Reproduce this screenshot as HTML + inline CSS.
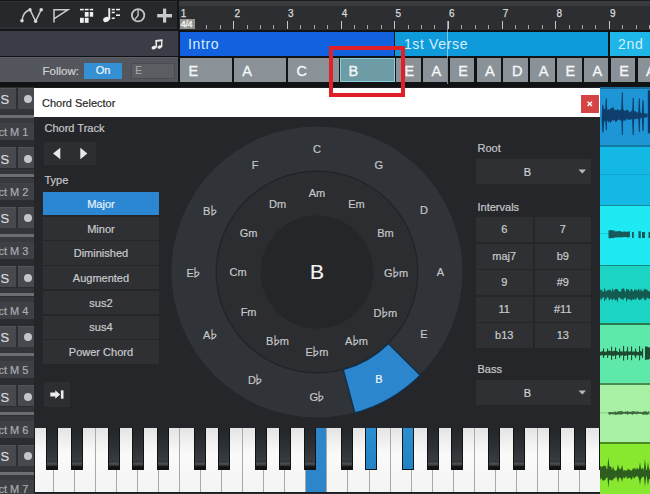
<!DOCTYPE html>
<html><head><meta charset="utf-8"><style>
*{margin:0;padding:0;box-sizing:border-box}
html,body{width:650px;height:494px;overflow:hidden;background:#1b1c1f;font-family:"Liberation Sans",sans-serif}
.ab{position:absolute}
.t{position:absolute;white-space:nowrap;line-height:1;-webkit-text-stroke:0.2px currentColor}
</style></head><body>
<div class="ab" style="left:0;top:0;width:650px;height:494px;overflow:hidden">

<div class="ab" style="left:0;top:0;width:178px;height:30px;background:#26282c;border-top:1px solid #141517"></div>
<div class="ab" style="left:0;top:1px;width:178px;height:1px;background:#2e3034"></div>
<div class="ab" style="left:0;top:27px;width:178px;height:1.5px;background:#2c2e32"></div>
<div class="ab" style="left:0;top:28.8px;width:650px;height:2.2px;background:#141517"></div>
<div class="ab" style="left:179px;top:0;width:471px;height:29.5px;background:#2c2e32"></div>
<div class="ab" style="left:179px;top:0;width:471px;height:1px;background:#1c1d20"></div>
<div class="ab" style="left:179px;top:1px;width:471px;height:5px;background:#393b3f"></div>
<div class="ab" style="left:177px;top:0;width:2px;height:31px;background:#141517"></div>
<div class="t" style="left:180.8px;top:8.9px;font-size:10px;color:#dcdcdc;-webkit-text-stroke:0.25px #dcdcdc">1</div>
<div class="ab" style="left:179.5px;top:21px;width:1px;height:8px;background:#c8c8c8"></div>
<div class="ab" style="left:192.9px;top:25px;width:1px;height:4px;background:#a8a8a8"></div>
<div class="ab" style="left:206.3px;top:25px;width:1px;height:4px;background:#a8a8a8"></div>
<div class="ab" style="left:219.7px;top:25px;width:1px;height:4px;background:#a8a8a8"></div>
<div class="t" style="left:234.5px;top:8.9px;font-size:10px;color:#dcdcdc;-webkit-text-stroke:0.25px #dcdcdc">2</div>
<div class="ab" style="left:233.2px;top:21px;width:1px;height:8px;background:#c8c8c8"></div>
<div class="ab" style="left:246.6px;top:25px;width:1px;height:4px;background:#a8a8a8"></div>
<div class="ab" style="left:260.0px;top:25px;width:1px;height:4px;background:#a8a8a8"></div>
<div class="ab" style="left:273.4px;top:25px;width:1px;height:4px;background:#a8a8a8"></div>
<div class="t" style="left:288.1px;top:8.9px;font-size:10px;color:#dcdcdc;-webkit-text-stroke:0.25px #dcdcdc">3</div>
<div class="ab" style="left:286.8px;top:21px;width:1px;height:8px;background:#c8c8c8"></div>
<div class="ab" style="left:300.2px;top:25px;width:1px;height:4px;background:#a8a8a8"></div>
<div class="ab" style="left:313.6px;top:25px;width:1px;height:4px;background:#a8a8a8"></div>
<div class="ab" style="left:327.1px;top:25px;width:1px;height:4px;background:#a8a8a8"></div>
<div class="t" style="left:341.8px;top:8.9px;font-size:10px;color:#dcdcdc;-webkit-text-stroke:0.25px #dcdcdc">4</div>
<div class="ab" style="left:340.5px;top:21px;width:1px;height:8px;background:#c8c8c8"></div>
<div class="ab" style="left:353.9px;top:25px;width:1px;height:4px;background:#a8a8a8"></div>
<div class="ab" style="left:367.3px;top:25px;width:1px;height:4px;background:#a8a8a8"></div>
<div class="ab" style="left:380.7px;top:25px;width:1px;height:4px;background:#a8a8a8"></div>
<div class="t" style="left:395.4px;top:8.9px;font-size:10px;color:#dcdcdc;-webkit-text-stroke:0.25px #dcdcdc">5</div>
<div class="ab" style="left:394.1px;top:21px;width:1px;height:8px;background:#c8c8c8"></div>
<div class="ab" style="left:407.6px;top:25px;width:1px;height:4px;background:#a8a8a8"></div>
<div class="ab" style="left:421.0px;top:25px;width:1px;height:4px;background:#a8a8a8"></div>
<div class="ab" style="left:434.4px;top:25px;width:1px;height:4px;background:#a8a8a8"></div>
<div class="t" style="left:449.1px;top:8.9px;font-size:10px;color:#dcdcdc;-webkit-text-stroke:0.25px #dcdcdc">6</div>
<div class="ab" style="left:447.8px;top:21px;width:1px;height:8px;background:#c8c8c8"></div>
<div class="ab" style="left:461.2px;top:25px;width:1px;height:4px;background:#a8a8a8"></div>
<div class="ab" style="left:474.6px;top:25px;width:1px;height:4px;background:#a8a8a8"></div>
<div class="ab" style="left:488.0px;top:25px;width:1px;height:4px;background:#a8a8a8"></div>
<div class="t" style="left:502.8px;top:8.9px;font-size:10px;color:#dcdcdc;-webkit-text-stroke:0.25px #dcdcdc">7</div>
<div class="ab" style="left:501.5px;top:21px;width:1px;height:8px;background:#c8c8c8"></div>
<div class="ab" style="left:514.9px;top:25px;width:1px;height:4px;background:#a8a8a8"></div>
<div class="ab" style="left:528.3px;top:25px;width:1px;height:4px;background:#a8a8a8"></div>
<div class="ab" style="left:541.7px;top:25px;width:1px;height:4px;background:#a8a8a8"></div>
<div class="t" style="left:556.4px;top:8.9px;font-size:10px;color:#dcdcdc;-webkit-text-stroke:0.25px #dcdcdc">8</div>
<div class="ab" style="left:555.1px;top:21px;width:1px;height:8px;background:#c8c8c8"></div>
<div class="ab" style="left:568.5px;top:25px;width:1px;height:4px;background:#a8a8a8"></div>
<div class="ab" style="left:582.0px;top:25px;width:1px;height:4px;background:#a8a8a8"></div>
<div class="ab" style="left:595.4px;top:25px;width:1px;height:4px;background:#a8a8a8"></div>
<div class="t" style="left:610.1px;top:8.9px;font-size:10px;color:#dcdcdc;-webkit-text-stroke:0.25px #dcdcdc">9</div>
<div class="ab" style="left:608.8px;top:21px;width:1px;height:8px;background:#c8c8c8"></div>
<div class="ab" style="left:622.2px;top:25px;width:1px;height:4px;background:#a8a8a8"></div>
<div class="ab" style="left:635.6px;top:25px;width:1px;height:4px;background:#a8a8a8"></div>
<div class="ab" style="left:649.0px;top:25px;width:1px;height:4px;background:#a8a8a8"></div>
<div class="ab" style="left:179.5px;top:18.8px;width:15.5px;height:10.7px;background:#92928c"></div>
<div class="t" style="left:180.8px;top:19.8px;font-size:9px;color:#f4f4f4;letter-spacing:-0.4px;-webkit-text-stroke:0.35px #f4f4f4">4/4</div>
<svg class="ab" style="left:0;top:0" width="178" height="30">
<g fill="none" stroke="#c9cacb" stroke-width="1.5" stroke-linecap="round">
<path d="M22 20.8 C22.5 15 25.5 11 30 9.7"/><path d="M30 9.7 L35.6 21.3 L41.2 9.7"/>
<path d="M54 22 V9.7 H68 L54.3 18.7"/>
</g>
<g fill="#d6d7d8">
<circle cx="22" cy="20.8" r="1.8"/><circle cx="30" cy="9.7" r="1.7"/><circle cx="35.6" cy="21.3" r="1.7"/><circle cx="41.2" cy="9.7" r="1.8"/>
</g>
<g fill="#f0f0f0">
<rect x="80" y="8.8" width="3.8" height="1.6"/><rect x="84.8" y="8.8" width="3.8" height="1.6"/><rect x="89.8" y="8.8" width="3.4" height="1.6"/>
<rect x="84.8" y="12" width="3.8" height="4.7"/><rect x="89.8" y="12" width="3.4" height="4.7"/>
<rect x="80" y="17.8" width="3.8" height="5"/><rect x="84.8" y="17.8" width="3.8" height="5"/>
<ellipse cx="106.2" cy="19.6" rx="3.1" ry="2.5" transform="rotate(-25 106.2 19.6)"/><rect x="108.3" y="8.2" width="1.9" height="11.4"/>
<rect x="111.7" y="8.8" width="3.1" height="1.5"/><rect x="116" y="8.8" width="4" height="1.5"/>
<rect x="111.7" y="11.7" width="3.1" height="1.5"/><rect x="116" y="14.4" width="4" height="1.6"/>
<rect x="111.7" y="17.5" width="3.1" height="1.5"/>
</g>
<g fill="#c8c9ca">
<rect x="157.2" y="14" width="14.8" height="3.4"/><rect x="163" y="8.6" width="3.2" height="14"/>
</g>
<g fill="none" stroke="#c4c5c6">
<circle cx="138.1" cy="15.25" r="6.2" stroke-width="1.8"/>
<path d="M138.1 10 V15.5 L134.6 19.6" stroke-width="1.4"/>
</g>
</svg>
<div class="ab" style="left:0;top:31px;width:178px;height:25px;background:#3a3d45"></div>
<svg class="ab" style="left:146px;top:34px" width="24" height="20"><g fill="#ececec"><path d="M9.5 6.1 L16.4 5.2 V7.1 L9.5 8 Z"/><rect x="9.5" y="6.5" width="1.5" height="7"/><rect x="15" y="5.7" width="1.4" height="7.2"/><ellipse cx="7.9" cy="13.6" rx="2.4" ry="1.8" transform="rotate(-20 7.9 13.6)"/><ellipse cx="13.6" cy="13" rx="2.2" ry="1.7" transform="rotate(-20 13.6 13)"/></g></svg>
<div class="ab" style="left:179px;top:31px;width:471px;height:26px;background:#111214"></div>
<div class="ab" style="left:179.5px;top:31.5px;width:214.0px;height:24.5px;background:#1262e0"></div>
<div class="t" style="left:188.0px;top:37px;font-size:14px;letter-spacing:0.65px;color:#d6eefc;-webkit-text-stroke:0">Intro</div>
<div class="ab" style="left:395.4px;top:31.5px;width:212.4px;height:24.5px;background:#0f9bdb"></div>
<div class="t" style="left:403.9px;top:37px;font-size:14px;letter-spacing:0.65px;color:#d6eefc;-webkit-text-stroke:0">1st Verse</div>
<div class="ab" style="left:609.6px;top:31.5px;width:90.4px;height:24.5px;background:#1eb6e8"></div>
<div class="t" style="left:618.1px;top:37px;font-size:14px;letter-spacing:0.65px;color:#d6eefc;-webkit-text-stroke:0">2nd</div>
<div class="ab" style="left:0;top:56px;width:650px;height:31px;background:#111214"></div>
<div class="ab" style="left:0;top:57px;width:178px;height:24.8px;background:#53565c;border-top:1px solid #5c5f65"></div>
<div class="t" style="left:42.5px;top:65.5px;font-size:11.5px;color:#d0d2d4">Follow:</div>
<div class="ab" style="left:84px;top:62.5px;width:38px;height:16.5px;background:#3590d3"></div>
<div class="t" style="left:84px;top:64.5px;width:38px;text-align:center;font-size:11px;color:#eef6fc">On</div>
<div class="ab" style="left:130.5px;top:63px;width:44px;height:16px;background:#5a5d62;border:1px solid #4a4d52"></div>
<div class="t" style="left:135.3px;top:65.8px;font-size:10px;color:#a8abae">E</div>
<div class="ab" style="left:180.0px;top:57.6px;width:51.9px;height:24.8px;background:#8a9298;"></div>
<div class="t" style="left:188.5px;top:64px;font-size:14.5px;color:#f4f6f7;-webkit-text-stroke:0.35px #f4f6f7">E</div>
<div class="ab" style="left:233.7px;top:57.6px;width:52.8px;height:24.8px;background:#8a9298;"></div>
<div class="t" style="left:242.2px;top:64px;font-size:14.5px;color:#f4f6f7;-webkit-text-stroke:0.35px #f4f6f7">A</div>
<div class="ab" style="left:288.0px;top:57.6px;width:50.5px;height:24.8px;background:#8a9298;"></div>
<div class="t" style="left:296.5px;top:64px;font-size:14.5px;color:#f4f6f7;-webkit-text-stroke:0.35px #f4f6f7">C</div>
<div class="ab" style="left:340.0px;top:57.6px;width:54.6px;height:24.8px;background:#6d9ca7;border:1px solid #86d2dc;"></div>
<div class="t" style="left:348.5px;top:64px;font-size:14.5px;color:#f4f6f7;-webkit-text-stroke:0.35px #f4f6f7">B</div>
<div class="ab" style="left:396.1px;top:57.6px;width:24.6px;height:24.8px;background:#8a9298;"></div>
<div class="t" style="left:404.6px;top:64px;font-size:14.5px;color:#f4f6f7;-webkit-text-stroke:0.35px #f4f6f7">E</div>
<div class="ab" style="left:422.9px;top:57.6px;width:24.6px;height:24.8px;background:#8a9298;"></div>
<div class="t" style="left:431.4px;top:64px;font-size:14.5px;color:#f4f6f7;-webkit-text-stroke:0.35px #f4f6f7">A</div>
<div class="ab" style="left:449.8px;top:57.6px;width:24.6px;height:24.8px;background:#8a9298;"></div>
<div class="t" style="left:458.3px;top:64px;font-size:14.5px;color:#f4f6f7;-webkit-text-stroke:0.35px #f4f6f7">E</div>
<div class="ab" style="left:476.6px;top:57.6px;width:24.6px;height:24.8px;background:#8a9298;"></div>
<div class="t" style="left:485.1px;top:64px;font-size:14.5px;color:#f4f6f7;-webkit-text-stroke:0.35px #f4f6f7">A</div>
<div class="ab" style="left:503.4px;top:57.6px;width:24.6px;height:24.8px;background:#8a9298;"></div>
<div class="t" style="left:511.9px;top:64px;font-size:14.5px;color:#f4f6f7;-webkit-text-stroke:0.35px #f4f6f7">D</div>
<div class="ab" style="left:530.2px;top:57.6px;width:24.6px;height:24.8px;background:#8a9298;"></div>
<div class="t" style="left:538.8px;top:64px;font-size:14.5px;color:#f4f6f7;-webkit-text-stroke:0.35px #f4f6f7">A</div>
<div class="ab" style="left:557.1px;top:57.6px;width:24.6px;height:24.8px;background:#8a9298;"></div>
<div class="t" style="left:565.6px;top:64px;font-size:14.5px;color:#f4f6f7;-webkit-text-stroke:0.35px #f4f6f7">E</div>
<div class="ab" style="left:583.9px;top:57.6px;width:24.6px;height:24.8px;background:#8a9298;"></div>
<div class="t" style="left:592.4px;top:64px;font-size:14.5px;color:#f4f6f7;-webkit-text-stroke:0.35px #f4f6f7">A</div>
<div class="ab" style="left:610.7px;top:57.6px;width:24.6px;height:24.8px;background:#8a9298;"></div>
<div class="t" style="left:619.2px;top:64px;font-size:14.5px;color:#f4f6f7;-webkit-text-stroke:0.35px #f4f6f7">E</div>
<div class="ab" style="left:637.6px;top:57.6px;width:24.6px;height:24.8px;background:#8a9298;"></div>
<div class="t" style="left:646.1px;top:64px;font-size:14.5px;color:#f4f6f7;-webkit-text-stroke:0.35px #f4f6f7">A</div>
<div class="ab" style="left:0;top:87px;width:34px;height:407px;background:#2a2c30"></div>
<div class="ab" style="left:0;top:87.6px;width:16.2px;height:21.4px;background:#46494e;border-top:1px solid #515459"></div>
<div class="t" style="left:0.5px;top:93.1px;font-size:13px;color:#d8dadc">S</div>
<div class="ab" style="left:16.2px;top:87.6px;width:1.3px;height:21.4px;background:#2e3034"></div>
<div class="ab" style="left:17.5px;top:87.6px;width:16.5px;height:21.4px;background:#46494e;border-top:1px solid #515459"></div>
<div class="ab" style="left:23.6px;top:95.0px;width:8.4px;height:8.4px;border-radius:50%;background:#c4c5c7"></div>
<div class="ab" style="left:0;top:109.0px;width:34px;height:5.9px;background:#333539"></div>
<div class="ab" style="left:0;top:114.9px;width:34px;height:2.8px;background:#6a6d71"></div>
<div class="ab" style="left:0;top:118.0px;width:34px;height:22px;background:#3d4045"></div>
<div class="ab" style="left:0;top:118.0px;width:34px;height:5px;background:#37393e"></div>
<div class="t" style="left:-1.5px;top:127.1px;font-size:11px;color:#a9acaf">ct M 1</div>
<div class="ab" style="left:0;top:147.1px;width:16.2px;height:21.4px;background:#46494e;border-top:1px solid #515459"></div>
<div class="t" style="left:0.5px;top:152.6px;font-size:13px;color:#d8dadc">S</div>
<div class="ab" style="left:16.2px;top:147.1px;width:1.3px;height:21.4px;background:#2e3034"></div>
<div class="ab" style="left:17.5px;top:147.1px;width:16.5px;height:21.4px;background:#46494e;border-top:1px solid #515459"></div>
<div class="ab" style="left:23.6px;top:154.5px;width:8.4px;height:8.4px;border-radius:50%;background:#c4c5c7"></div>
<div class="ab" style="left:0;top:168.5px;width:34px;height:5.9px;background:#333539"></div>
<div class="ab" style="left:0;top:174.4px;width:34px;height:2.8px;background:#6a6d71"></div>
<div class="ab" style="left:0;top:177.5px;width:34px;height:22px;background:#3d4045"></div>
<div class="ab" style="left:0;top:177.5px;width:34px;height:5px;background:#37393e"></div>
<div class="t" style="left:-1.5px;top:186.6px;font-size:11px;color:#a9acaf">ct M 2</div>
<div class="ab" style="left:0;top:206.6px;width:16.2px;height:21.4px;background:#46494e;border-top:1px solid #515459"></div>
<div class="t" style="left:0.5px;top:212.1px;font-size:13px;color:#d8dadc">S</div>
<div class="ab" style="left:16.2px;top:206.6px;width:1.3px;height:21.4px;background:#2e3034"></div>
<div class="ab" style="left:17.5px;top:206.6px;width:16.5px;height:21.4px;background:#46494e;border-top:1px solid #515459"></div>
<div class="ab" style="left:23.6px;top:214.0px;width:8.4px;height:8.4px;border-radius:50%;background:#c4c5c7"></div>
<div class="ab" style="left:0;top:228.0px;width:34px;height:5.9px;background:#333539"></div>
<div class="ab" style="left:0;top:233.9px;width:34px;height:2.8px;background:#6a6d71"></div>
<div class="ab" style="left:0;top:237.0px;width:34px;height:22px;background:#3d4045"></div>
<div class="ab" style="left:0;top:237.0px;width:34px;height:5px;background:#37393e"></div>
<div class="t" style="left:-1.5px;top:246.1px;font-size:11px;color:#a9acaf">ct M 3</div>
<div class="ab" style="left:0;top:266.1px;width:16.2px;height:21.4px;background:#46494e;border-top:1px solid #515459"></div>
<div class="t" style="left:0.5px;top:271.6px;font-size:13px;color:#d8dadc">S</div>
<div class="ab" style="left:16.2px;top:266.1px;width:1.3px;height:21.4px;background:#2e3034"></div>
<div class="ab" style="left:17.5px;top:266.1px;width:16.5px;height:21.4px;background:#46494e;border-top:1px solid #515459"></div>
<div class="ab" style="left:23.6px;top:273.5px;width:8.4px;height:8.4px;border-radius:50%;background:#c4c5c7"></div>
<div class="ab" style="left:0;top:287.5px;width:34px;height:5.9px;background:#333539"></div>
<div class="ab" style="left:0;top:293.4px;width:34px;height:2.8px;background:#6a6d71"></div>
<div class="ab" style="left:0;top:296.5px;width:34px;height:22px;background:#3d4045"></div>
<div class="ab" style="left:0;top:296.5px;width:34px;height:5px;background:#37393e"></div>
<div class="t" style="left:-1.5px;top:305.6px;font-size:11px;color:#a9acaf">ct M 4</div>
<div class="ab" style="left:0;top:325.6px;width:16.2px;height:21.4px;background:#46494e;border-top:1px solid #515459"></div>
<div class="t" style="left:0.5px;top:331.1px;font-size:13px;color:#d8dadc">S</div>
<div class="ab" style="left:16.2px;top:325.6px;width:1.3px;height:21.4px;background:#2e3034"></div>
<div class="ab" style="left:17.5px;top:325.6px;width:16.5px;height:21.4px;background:#46494e;border-top:1px solid #515459"></div>
<div class="ab" style="left:23.6px;top:333.0px;width:8.4px;height:8.4px;border-radius:50%;background:#c4c5c7"></div>
<div class="ab" style="left:0;top:347.0px;width:34px;height:5.9px;background:#333539"></div>
<div class="ab" style="left:0;top:352.9px;width:34px;height:2.8px;background:#6a6d71"></div>
<div class="ab" style="left:0;top:356.0px;width:34px;height:22px;background:#3d4045"></div>
<div class="ab" style="left:0;top:356.0px;width:34px;height:5px;background:#37393e"></div>
<div class="t" style="left:-1.5px;top:365.1px;font-size:11px;color:#a9acaf">ct M 5</div>
<div class="ab" style="left:0;top:385.1px;width:16.2px;height:21.4px;background:#46494e;border-top:1px solid #515459"></div>
<div class="t" style="left:0.5px;top:390.6px;font-size:13px;color:#d8dadc">S</div>
<div class="ab" style="left:16.2px;top:385.1px;width:1.3px;height:21.4px;background:#2e3034"></div>
<div class="ab" style="left:17.5px;top:385.1px;width:16.5px;height:21.4px;background:#46494e;border-top:1px solid #515459"></div>
<div class="ab" style="left:23.6px;top:392.5px;width:8.4px;height:8.4px;border-radius:50%;background:#c4c5c7"></div>
<div class="ab" style="left:0;top:406.5px;width:34px;height:5.9px;background:#333539"></div>
<div class="ab" style="left:0;top:412.4px;width:34px;height:2.8px;background:#6a6d71"></div>
<div class="ab" style="left:0;top:415.5px;width:34px;height:22px;background:#3d4045"></div>
<div class="ab" style="left:0;top:415.5px;width:34px;height:5px;background:#37393e"></div>
<div class="t" style="left:-1.5px;top:424.6px;font-size:11px;color:#a9acaf">ct M 6</div>
<div class="ab" style="left:0;top:444.6px;width:16.2px;height:21.4px;background:#46494e;border-top:1px solid #515459"></div>
<div class="t" style="left:0.5px;top:450.1px;font-size:13px;color:#d8dadc">S</div>
<div class="ab" style="left:16.2px;top:444.6px;width:1.3px;height:21.4px;background:#2e3034"></div>
<div class="ab" style="left:17.5px;top:444.6px;width:16.5px;height:21.4px;background:#46494e;border-top:1px solid #515459"></div>
<div class="ab" style="left:23.6px;top:452.0px;width:8.4px;height:8.4px;border-radius:50%;background:#c4c5c7"></div>
<div class="ab" style="left:0;top:466.0px;width:34px;height:5.9px;background:#333539"></div>
<div class="ab" style="left:0;top:471.9px;width:34px;height:2.8px;background:#6a6d71"></div>
<div class="ab" style="left:0;top:475.0px;width:34px;height:22px;background:#3d4045"></div>
<div class="ab" style="left:0;top:475.0px;width:34px;height:5px;background:#37393e"></div>
<div class="t" style="left:-1.5px;top:484.1px;font-size:11px;color:#a9acaf">ct M 7</div>
<div class="ab" style="left:598px;top:87px;width:2px;height:407px;background:#1a2526"></div>
<div class="ab" style="left:600px;top:87px;width:50px;height:58.0px;background:#1e96d6"></div>
<div class="ab" style="left:600px;top:87px;width:50px;height:1.5px;background:#1a6a9a"></div>
<div class="ab" style="left:600px;top:145px;width:50px;height:59.5px;background:#13b8e4"></div>
<div class="ab" style="left:600px;top:145px;width:50px;height:1.5px;background:#107aa0"></div>
<div class="ab" style="left:600px;top:204.5px;width:50px;height:60.0px;background:#1feaf3"></div>
<div class="ab" style="left:600px;top:204.5px;width:50px;height:1.5px;background:#128a96"></div>
<div class="ab" style="left:600px;top:264.5px;width:50px;height:58.5px;background:#1cd4c4"></div>
<div class="ab" style="left:600px;top:264.5px;width:50px;height:1.5px;background:#128a80"></div>
<div class="ab" style="left:600px;top:323px;width:50px;height:60.0px;background:#5ee8aa"></div>
<div class="ab" style="left:600px;top:323px;width:50px;height:1.5px;background:#2a7a50"></div>
<div class="ab" style="left:600px;top:383px;width:50px;height:59.0px;background:#a8f0a4"></div>
<div class="ab" style="left:600px;top:383px;width:50px;height:1.5px;background:#4a8a50"></div>
<div class="ab" style="left:600px;top:442px;width:50px;height:52.0px;background:#88e830"></div>
<div class="ab" style="left:600px;top:442px;width:50px;height:1.5px;background:#4a8a20"></div>
<div class="ab" style="left:600px;top:174px;width:50px;height:1px;background:#10a6d2"></div>
<svg class="ab" style="left:600px;top:0" width="50" height="494">
<path d="M2.5 110.5 L3.5 108.5 L4.5 108.6 L5.5 110.3 L6.5 110.4 L7.5 110.3 L8.5 109.0 L9.5 110.1 L10.5 108.2 L11.5 108.4 L12.5 107.0 L13.5 107.6 L14.5 110.3 L15.5 109.8 L16.5 110.3 L17.5 109.0 L18.5 109.4 L19.5 111.0 L20.5 109.3 L21.5 110.5 L22.5 110.2 L23.5 109.4 L24.5 111.0 L25.5 110.4 L26.5 110.0 L27.5 109.5 L28.5 111.0 L29.5 111.8 L30.5 112.2 L31.5 110.6 L32.5 110.6 L33.5 111.1 L34.5 111.5 L35.5 111.1 L36.5 111.9 L37.5 112.8 L38.5 111.9 L39.5 111.7 L40.5 112.6 L41.5 113.2 L42.5 113.1 L43.5 113.4 L44.5 113.4 L45.5 113.2 L46.5 113.7 L47.5 113.1 L47.5 117.6 L46.5 117.2 L45.5 117.8 L44.5 117.2 L43.5 118.0 L42.5 117.2 L41.5 117.8 L40.5 118.3 L39.5 117.8 L38.5 119.1 L37.5 118.7 L36.5 118.8 L35.5 119.5 L34.5 118.7 L33.5 119.1 L32.5 118.6 L31.5 119.3 L30.5 119.7 L29.5 119.4 L28.5 120.2 L27.5 118.7 L26.5 119.3 L25.5 120.9 L24.5 120.3 L23.5 120.8 L22.5 119.8 L21.5 120.7 L20.5 120.4 L19.5 119.8 L18.5 119.5 L17.5 120.6 L16.5 121.4 L15.5 122.3 L14.5 120.1 L13.5 120.8 L12.5 120.0 L11.5 121.3 L10.5 123.3 L9.5 120.7 L8.5 122.9 L7.5 120.2 L6.5 121.5 L5.5 121.7 L4.5 121.2 L3.5 119.9 L2.5 119.4 Z" fill="#0f3f6c"/>
<path d="M2.9 104 L4.10 114.7 L4.10 122.7 L2.9 133.4 L1.70 122.7 L1.70 114.7 Z" fill="#0f3f6c"/>
<rect x="2.35" y="105" width="1.1" height="27.4" fill="#0f3f6c"/>
<path d="M6.3 97.5 L7.40 110.2 L7.40 118.2 L6.3 131 L5.20 118.2 L5.20 110.2 Z" fill="#0f3f6c"/>
<rect x="5.75" y="98.5" width="1.1" height="31.5" fill="#0f3f6c"/>
<path d="M22.3 91.5 L23.35 109.7 L23.35 117.7 L22.3 135.8 L21.25 117.7 L21.25 109.7 Z" fill="#0f3f6c"/>
<rect x="21.75" y="92.5" width="1.1" height="42.3" fill="#0f3f6c"/>
<path d="M33.2 97 L34.20 112.4 L34.20 120.4 L33.2 135.8 L32.20 120.4 L32.20 112.4 Z" fill="#0f3f6c"/>
<rect x="32.65" y="98" width="1.1" height="36.8" fill="#0f3f6c"/>
<path d="M39.3 97.5 L40.30 111.2 L40.30 119.2 L39.3 132.8 L38.30 119.2 L38.30 111.2 Z" fill="#0f3f6c"/>
<rect x="38.75" y="98.5" width="1.1" height="33.3" fill="#0f3f6c"/>
<path d="M43.0 99.4 L44.00 111.7 L44.00 119.7 L43.0 132 L42.00 119.7 L42.00 111.7 Z" fill="#0f3f6c"/>
<rect x="42.45" y="100.4" width="1.1" height="30.6" fill="#0f3f6c"/>
<rect x="47.8" y="90.3" width="2.2" height="43" fill="#0a3a6a"/>
<rect x="0" y="233.3" width="9" height="0.7" fill="#18c0c8"/>
<path d="M8.5 229.9 L9.5 230.4 L10.5 230.3 L11.5 229.8 L12.5 230.5 L13.5 230.5 L14.5 230.1 L14.5 238.0 L13.5 238.2 L12.5 237.9 L11.5 237.9 L10.5 238.6 L9.5 238.1 L8.5 238.5 Z" fill="#165a5c"/>
<path d="M14.0 231.8 L15.0 231.5 L16.0 231.1 L17.0 231.4 L18.0 231.3 L19.0 231.1 L20.0 231.1 L21.0 231.5 L22.0 231.7 L23.0 231.7 L24.0 231.6 L25.0 231.5 L26.0 231.8 L27.0 231.7 L28.0 231.7 L29.0 231.3 L30.0 231.6 L30.0 237.3 L29.0 237.1 L28.0 237.7 L27.0 237.3 L26.0 237.1 L25.0 237.1 L24.0 237.2 L23.0 237.1 L22.0 237.5 L21.0 237.3 L20.0 237.6 L19.0 237.6 L18.0 237.1 L17.0 237.5 L16.0 237.5 L15.0 237.4 L14.0 237.3 Z" fill="#165a5c"/>
<rect x="32" y="232" width="1.8" height="6" fill="#165a5c"/>
<rect x="38.5" y="231.2" width="2.3" height="7" fill="#165a5c"/>
<rect x="42" y="232" width="3" height="6" fill="#165a5c"/>
<rect x="48.5" y="232" width="1.5" height="6" fill="#165a5c"/>
<path d="M0.0 290.8 L1.0 289.0 L2.0 290.4 L3.0 291.9 L4.0 290.9 L5.0 289.1 L6.0 292.1 L7.0 290.2 L8.0 290.1 L9.0 290.2 L10.0 288.9 L11.0 291.2 L12.0 291.6 L13.0 290.2 L14.0 290.9 L15.0 289.1 L16.0 289.0 L17.0 289.1 L18.0 291.3 L19.0 290.8 L20.0 292.1 L21.0 291.2 L22.0 288.6 L23.0 288.6 L24.0 288.6 L25.0 291.4 L26.0 291.4 L27.0 289.8 L28.0 289.0 L29.0 289.7 L30.0 291.9 L31.0 288.8 L32.0 289.4 L33.0 291.5 L34.0 290.9 L35.0 288.5 L36.0 290.7 L37.0 289.5 L38.0 291.7 L39.0 288.8 L40.0 291.6 L41.0 288.5 L42.0 290.9 L43.0 291.7 L44.0 288.5 L45.0 290.2 L46.0 290.6 L47.0 289.1 L48.0 291.2 L49.0 291.3 L50.0 291.2 L50.0 298.4 L49.0 299.0 L48.0 297.9 L47.0 297.6 L46.0 300.1 L45.0 300.3 L44.0 299.3 L43.0 296.9 L42.0 298.9 L41.0 299.3 L40.0 299.9 L39.0 299.9 L38.0 297.4 L37.0 297.5 L36.0 300.4 L35.0 298.3 L34.0 299.8 L33.0 299.8 L32.0 298.6 L31.0 299.8 L30.0 299.3 L29.0 299.8 L28.0 298.6 L27.0 300.2 L26.0 297.6 L25.0 297.7 L24.0 298.2 L23.0 300.5 L22.0 298.5 L21.0 299.4 L20.0 297.9 L19.0 296.9 L18.0 298.8 L17.0 299.6 L16.0 299.9 L15.0 300.5 L14.0 297.7 L13.0 299.8 L12.0 299.7 L11.0 298.2 L10.0 299.4 L9.0 300.5 L8.0 296.9 L7.0 297.4 L6.0 300.4 L5.0 297.4 L4.0 297.8 L3.0 297.2 L2.0 298.6 L1.0 300.6 L0.0 297.3 Z" fill="#135a50"/>
<rect x="4" y="288.3" width="1" height="12.7" fill="#135a50"/>
<rect x="12" y="288.7" width="1" height="11.4" fill="#135a50"/>
<rect x="17" y="289.2" width="1" height="12.7" fill="#135a50"/>
<rect x="26" y="288.8" width="1" height="12.8" fill="#135a50"/>
<rect x="31" y="289.0" width="1" height="11.6" fill="#135a50"/>
<rect x="38" y="289.0" width="1" height="10.1" fill="#135a50"/>
<rect x="45" y="288.9" width="1" height="10.5" fill="#135a50"/>
<path d="M0.0 352.1 L1.0 351.8 L2.0 350.9 L3.0 351.6 L4.0 351.2 L5.0 351.9 L6.0 351.7 L7.0 350.9 L8.0 351.2 L9.0 350.6 L10.0 351.1 L11.0 351.3 L12.0 351.4 L13.0 351.3 L14.0 351.0 L15.0 350.6 L16.0 351.2 L17.0 350.8 L18.0 351.9 L19.0 352.0 L20.0 352.0 L21.0 350.8 L22.0 351.9 L23.0 351.0 L24.0 350.7 L25.0 351.7 L26.0 351.5 L27.0 350.5 L28.0 351.8 L29.0 351.3 L30.0 351.8 L31.0 350.9 L32.0 351.2 L33.0 352.1 L34.0 351.1 L35.0 352.0 L36.0 350.8 L37.0 351.9 L38.0 352.0 L39.0 351.7 L40.0 351.4 L41.0 350.8 L42.0 351.9 L43.0 351.2 L43.0 355.6 L42.0 356.0 L41.0 354.9 L40.0 356.0 L39.0 354.7 L38.0 355.7 L37.0 354.9 L36.0 356.1 L35.0 356.1 L34.0 355.3 L33.0 355.0 L32.0 355.2 L31.0 354.5 L30.0 355.0 L29.0 355.0 L28.0 355.2 L27.0 355.8 L26.0 355.3 L25.0 356.0 L24.0 356.0 L23.0 354.7 L22.0 355.6 L21.0 355.9 L20.0 355.6 L19.0 354.9 L18.0 355.2 L17.0 354.7 L16.0 356.0 L15.0 354.9 L14.0 355.9 L13.0 356.0 L12.0 355.4 L11.0 355.6 L10.0 355.3 L9.0 355.2 L8.0 355.7 L7.0 355.3 L6.0 354.9 L5.0 355.4 L4.0 355.8 L3.0 355.3 L2.0 355.4 L1.0 355.3 L0.0 355.8 Z" fill="#1d4a30"/>
<rect x="3" y="348.5" width="1.1" height="9.5" fill="#1d4a30"/>
<rect x="7" y="348.6" width="1.1" height="9.3" fill="#1d4a30"/>
<rect x="11" y="346.7" width="1.1" height="13.1" fill="#1d4a30"/>
<rect x="15" y="347.5" width="1.1" height="11.6" fill="#1d4a30"/>
<rect x="19" y="348.6" width="1.1" height="9.4" fill="#1d4a30"/>
<rect x="23" y="346.0" width="1.1" height="14.6" fill="#1d4a30"/>
<rect x="27" y="346.9" width="1.1" height="12.8" fill="#1d4a30"/>
<rect x="31" y="346.4" width="1.1" height="13.8" fill="#1d4a30"/>
<rect x="35" y="348.5" width="1.1" height="9.5" fill="#1d4a30"/>
<rect x="39" y="346.2" width="1.1" height="14.1" fill="#1d4a30"/>
<rect x="42" y="348.6" width="1.1" height="9.4" fill="#1d4a30"/>
<path d="M45.0 346.1 L46.0 347.1 L47.0 346.0 L48.0 347.5 L49.0 347.3 L50.0 347.5 L50.0 358.9 L49.0 359.0 L48.0 359.9 L47.0 359.3 L46.0 359.9 L45.0 359.7 Z" fill="#1d4a30"/>
<rect x="0" y="412.5" width="9" height="0.8" fill="#7ec884"/>
<path d="M8.4 412.0 L9.4 411.9 L10.4 411.9 L11.4 412.1 L12.4 412.3 L13.4 412.3 L14.4 411.5 L15.4 411.6 L16.4 412.2 L17.4 411.7 L18.4 411.1 L19.4 411.6 L20.4 410.9 L21.4 411.1 L22.4 411.4 L23.4 411.8 L24.4 412.1 L25.4 411.3 L26.4 412.1 L27.4 411.1 L28.4 411.4 L29.4 412.0 L30.4 411.7 L31.4 411.7 L32.4 411.0 L33.4 411.5 L34.4 410.9 L35.4 411.8 L36.4 411.8 L37.4 411.6 L38.4 411.6 L39.4 411.9 L40.4 411.7 L41.4 412.3 L42.4 412.0 L43.4 411.6 L44.4 411.4 L45.4 411.1 L46.4 411.8 L47.4 412.1 L48.4 411.4 L49.4 411.1 L49.4 414.9 L48.4 413.8 L47.4 414.7 L46.4 415.1 L45.4 414.2 L44.4 414.7 L43.4 414.8 L42.4 414.5 L41.4 414.1 L40.4 413.8 L39.4 413.8 L38.4 413.7 L37.4 414.0 L36.4 414.4 L35.4 413.7 L34.4 414.1 L33.4 414.0 L32.4 415.1 L31.4 414.1 L30.4 413.9 L29.4 414.1 L28.4 414.1 L27.4 414.9 L26.4 413.8 L25.4 414.1 L24.4 413.8 L23.4 413.8 L22.4 414.3 L21.4 414.7 L20.4 414.2 L19.4 414.7 L18.4 414.3 L17.4 414.4 L16.4 414.8 L15.4 415.0 L14.4 414.0 L13.4 414.7 L12.4 414.1 L11.4 414.2 L10.4 414.4 L9.4 414.8 L8.4 414.1 Z" fill="#3c6a3c"/>
<path d="M0.0 466.8 L1.0 465.8 L2.0 467.4 L3.0 465.7 L4.0 465.7 L5.0 465.4 L6.0 466.5 L7.0 470.0 L8.0 468.3 L9.0 465.7 L10.0 466.8 L11.0 466.5 L12.0 470.2 L13.0 466.2 L14.0 469.2 L15.0 470.9 L16.0 470.2 L17.0 470.2 L18.0 470.4 L19.0 467.5 L20.0 469.7 L21.0 468.6 L22.0 468.9 L23.0 470.9 L24.0 470.2 L25.0 470.0 L26.0 471.1 L27.0 470.2 L28.0 468.6 L29.0 470.1 L30.0 469.4 L31.0 470.7 L32.0 470.4 L33.0 467.7 L34.0 469.5 L35.0 467.5 L36.0 470.2 L37.0 467.6 L38.0 469.0 L39.0 469.2 L40.0 470.7 L41.0 469.3 L42.0 468.5 L43.0 467.8 L44.0 471.1 L45.0 469.3 L46.0 470.0 L47.0 469.9 L48.0 468.0 L49.0 468.4 L50.0 470.7 L50.0 479.3 L49.0 479.0 L48.0 475.8 L47.0 477.0 L46.0 476.3 L45.0 477.5 L44.0 475.8 L43.0 477.6 L42.0 476.7 L41.0 479.2 L40.0 478.9 L39.0 479.4 L38.0 476.3 L37.0 476.6 L36.0 476.6 L35.0 477.5 L34.0 478.9 L33.0 475.9 L32.0 479.5 L31.0 479.2 L30.0 477.6 L29.0 477.8 L28.0 478.4 L27.0 478.4 L26.0 476.0 L25.0 478.0 L24.0 478.6 L23.0 476.4 L22.0 478.2 L21.0 478.7 L20.0 477.6 L19.0 477.7 L18.0 478.6 L17.0 478.6 L16.0 476.1 L15.0 478.6 L14.0 478.3 L13.0 479.5 L12.0 481.1 L11.0 479.4 L10.0 480.2 L9.0 479.8 L8.0 477.4 L7.0 477.5 L6.0 478.0 L5.0 480.5 L4.0 480.0 L3.0 481.1 L2.0 479.5 L1.0 477.6 L0.0 480.8 Z" fill="#2d5e1e"/>
<path d="M8.4 457 L9.50 468.5 L9.50 476.5 L8.4 488 L7.30 476.5 L7.30 468.5 Z" fill="#2d5e1e"/>
<path d="M18.0 464 L19.10 469.5 L19.10 477.5 L18.0 483 L16.90 477.5 L16.90 469.5 Z" fill="#2d5e1e"/>
<path d="M22.0 465 L23.10 469.5 L23.10 477.5 L22.0 482 L20.90 477.5 L20.90 469.5 Z" fill="#2d5e1e"/>
<path d="M40.0 462 L41.10 469.5 L41.10 477.5 L40.0 485 L38.90 477.5 L38.90 469.5 Z" fill="#2d5e1e"/>
<path d="M45.0 459 L46.10 469.0 L46.10 477.0 L45.0 487 L43.90 477.0 L43.90 469.0 Z" fill="#2d5e1e"/>
<path d="M48.0 462 L49.10 470.0 L49.10 478.0 L48.0 486 L46.90 478.0 L46.90 470.0 Z" fill="#2d5e1e"/>
</svg>
<div class="ab" style="left:34px;top:87.5px;width:566px;height:29px;background:#ffffff"></div>
<div class="t" style="left:42px;top:97.6px;font-size:11px;color:#2a2a2a">Chord Selector</div>
<div class="ab" style="left:581px;top:95px;width:17.5px;height:17.5px;background:#d44446"></div>
<svg class="ab" style="left:581px;top:95px" width="18" height="18"><path d="M6.6 6.8 L11 11 M11 6.8 L6.6 11" stroke="#fff" stroke-width="1.4"/></svg>
<div class="ab" style="left:34px;top:116.5px;width:566px;height:312px;background:#25262a"></div>
<div class="t" style="left:44.5px;top:122.5px;font-size:11px;color:#c6c8ca">Chord Track</div>
<div class="ab" style="left:43.5px;top:142px;width:52.5px;height:23px;background:#2c2e32"></div>
<svg class="ab" style="left:43.5px;top:142px" width="53" height="23"><path d="M9 11.5 L16.3 5.8 V17.3 Z M36.3 5.8 V17.3 L43.3 11.5 Z" fill="#e8e8e8"/></svg>
<div class="t" style="left:44.5px;top:174.5px;font-size:11px;color:#c6c8ca">Type</div>
<div class="ab" style="left:43.3px;top:192.0px;width:115.3px;height:23.4px;background:#2b87d1"></div>
<div class="t" style="left:43.3px;top:198.9px;width:115.3px;text-align:center;font-size:11px;color:#e8f2fb">Major</div>
<div class="ab" style="left:43.3px;top:216.7px;width:115.3px;height:23.4px;background:#2e3034"></div>
<div class="t" style="left:43.3px;top:223.6px;width:115.3px;text-align:center;font-size:11px;color:#c9cbcd">Minor</div>
<div class="ab" style="left:43.3px;top:241.4px;width:115.3px;height:23.4px;background:#2e3034"></div>
<div class="t" style="left:43.3px;top:248.3px;width:115.3px;text-align:center;font-size:11px;color:#c9cbcd">Diminished</div>
<div class="ab" style="left:43.3px;top:266.1px;width:115.3px;height:23.4px;background:#2e3034"></div>
<div class="t" style="left:43.3px;top:273.0px;width:115.3px;text-align:center;font-size:11px;color:#c9cbcd">Augmented</div>
<div class="ab" style="left:43.3px;top:290.8px;width:115.3px;height:23.4px;background:#2e3034"></div>
<div class="t" style="left:43.3px;top:297.7px;width:115.3px;text-align:center;font-size:11px;color:#c9cbcd">sus2</div>
<div class="ab" style="left:43.3px;top:315.5px;width:115.3px;height:23.4px;background:#2e3034"></div>
<div class="t" style="left:43.3px;top:322.4px;width:115.3px;text-align:center;font-size:11px;color:#c9cbcd">sus4</div>
<div class="ab" style="left:43.3px;top:340.2px;width:115.3px;height:23.4px;background:#2e3034"></div>
<div class="t" style="left:43.3px;top:347.1px;width:115.3px;text-align:center;font-size:11px;color:#c9cbcd">Power Chord</div>
<div class="ab" style="left:43.8px;top:381.8px;width:26.2px;height:24.8px;background:#2c2e32"></div>
<svg class="ab" style="left:43.5px;top:382px" width="26" height="24"><path d="M6.3 10.6 H11.3 V8.3 L16.1 12.5 L11.3 16.7 V14.4 H6.3 Z" fill="#ececec"/><rect x="16.9" y="8.3" width="2.6" height="8.4" fill="#ececec"/></svg>
<svg class="ab" style="left:0;top:0" width="650" height="494">
<circle cx="317" cy="272" r="145.5" fill="#303337"/>
<circle cx="317" cy="272" r="100.8" fill="#2b2d31" stroke="#222326" stroke-width="1.2"/>
<circle cx="317" cy="272" r="56.5" fill="#25262a"/>
<path d="M388.42 343.42 L420.24 375.24 A146 146 0 0 1 354.79 413.03 L343.14 369.56 A101 101 0 0 0 388.42 343.42 Z" fill="#2c86cd" stroke="#13304a" stroke-width="1.5"/>
</svg>
<div class="t" style="left:287.0px;top:143.5px;width:60px;text-align:center;font-size:11px;color:#c5c7c9">C</div>
<div class="t" style="left:287.0px;top:188.0px;width:60px;text-align:center;font-size:11px;color:#c5c7c9">Am</div>
<div class="t" style="left:348.8px;top:160.0px;width:60px;text-align:center;font-size:11px;color:#c5c7c9">G</div>
<div class="t" style="left:326.5px;top:198.6px;width:60px;text-align:center;font-size:11px;color:#c5c7c9">Em</div>
<div class="t" style="left:394.0px;top:205.2px;width:60px;text-align:center;font-size:11px;color:#c5c7c9">D</div>
<div class="t" style="left:355.4px;top:227.5px;width:60px;text-align:center;font-size:11px;color:#c5c7c9">Bm</div>
<div class="t" style="left:410.5px;top:267.0px;width:60px;text-align:center;font-size:11px;color:#c5c7c9">A</div>
<div class="t" style="left:366.0px;top:267.0px;width:60px;text-align:center;font-size:11px;color:#c5c7c9">G<svg width="6" height="11" style="vertical-align:-1px;margin:0 0.3px 0 0.2px" viewBox="0 0 6 11"><path d="M1 0.3 V10 C2.6 9.2 5.2 7.6 5 6 C4.8 4.6 2.6 4.5 1 6.2" fill="none" stroke="currentColor" stroke-width="1.1"/></svg>m</div>
<div class="t" style="left:394.0px;top:328.8px;width:60px;text-align:center;font-size:11px;color:#c5c7c9">E</div>
<div class="t" style="left:355.4px;top:306.5px;width:60px;text-align:center;font-size:11px;color:#c5c7c9">D<svg width="6" height="11" style="vertical-align:-1px;margin:0 0.3px 0 0.2px" viewBox="0 0 6 11"><path d="M1 0.3 V10 C2.6 9.2 5.2 7.6 5 6 C4.8 4.6 2.6 4.5 1 6.2" fill="none" stroke="currentColor" stroke-width="1.1"/></svg>m</div>
<div class="t" style="left:348.8px;top:374.0px;width:60px;text-align:center;font-size:11px;color:#f0f6fb">B</div>
<div class="t" style="left:326.5px;top:335.4px;width:60px;text-align:center;font-size:11px;color:#c5c7c9">A<svg width="6" height="11" style="vertical-align:-1px;margin:0 0.3px 0 0.2px" viewBox="0 0 6 11"><path d="M1 0.3 V10 C2.6 9.2 5.2 7.6 5 6 C4.8 4.6 2.6 4.5 1 6.2" fill="none" stroke="currentColor" stroke-width="1.1"/></svg>m</div>
<div class="t" style="left:287.0px;top:390.5px;width:60px;text-align:center;font-size:11px;color:#c5c7c9">G<svg width="6" height="11" style="vertical-align:-1px;margin:0 0.3px 0 0.2px" viewBox="0 0 6 11"><path d="M1 0.3 V10 C2.6 9.2 5.2 7.6 5 6 C4.8 4.6 2.6 4.5 1 6.2" fill="none" stroke="currentColor" stroke-width="1.1"/></svg></div>
<div class="t" style="left:287.0px;top:346.0px;width:60px;text-align:center;font-size:11px;color:#c5c7c9">E<svg width="6" height="11" style="vertical-align:-1px;margin:0 0.3px 0 0.2px" viewBox="0 0 6 11"><path d="M1 0.3 V10 C2.6 9.2 5.2 7.6 5 6 C4.8 4.6 2.6 4.5 1 6.2" fill="none" stroke="currentColor" stroke-width="1.1"/></svg>m</div>
<div class="t" style="left:225.2px;top:374.0px;width:60px;text-align:center;font-size:11px;color:#c5c7c9">D<svg width="6" height="11" style="vertical-align:-1px;margin:0 0.3px 0 0.2px" viewBox="0 0 6 11"><path d="M1 0.3 V10 C2.6 9.2 5.2 7.6 5 6 C4.8 4.6 2.6 4.5 1 6.2" fill="none" stroke="currentColor" stroke-width="1.1"/></svg></div>
<div class="t" style="left:247.5px;top:335.4px;width:60px;text-align:center;font-size:11px;color:#c5c7c9">B<svg width="6" height="11" style="vertical-align:-1px;margin:0 0.3px 0 0.2px" viewBox="0 0 6 11"><path d="M1 0.3 V10 C2.6 9.2 5.2 7.6 5 6 C4.8 4.6 2.6 4.5 1 6.2" fill="none" stroke="currentColor" stroke-width="1.1"/></svg>m</div>
<div class="t" style="left:180.0px;top:328.8px;width:60px;text-align:center;font-size:11px;color:#c5c7c9">A<svg width="6" height="11" style="vertical-align:-1px;margin:0 0.3px 0 0.2px" viewBox="0 0 6 11"><path d="M1 0.3 V10 C2.6 9.2 5.2 7.6 5 6 C4.8 4.6 2.6 4.5 1 6.2" fill="none" stroke="currentColor" stroke-width="1.1"/></svg></div>
<div class="t" style="left:218.6px;top:306.5px;width:60px;text-align:center;font-size:11px;color:#c5c7c9">Fm</div>
<div class="t" style="left:163.5px;top:267.0px;width:60px;text-align:center;font-size:11px;color:#c5c7c9">E<svg width="6" height="11" style="vertical-align:-1px;margin:0 0.3px 0 0.2px" viewBox="0 0 6 11"><path d="M1 0.3 V10 C2.6 9.2 5.2 7.6 5 6 C4.8 4.6 2.6 4.5 1 6.2" fill="none" stroke="currentColor" stroke-width="1.1"/></svg></div>
<div class="t" style="left:208.0px;top:267.0px;width:60px;text-align:center;font-size:11px;color:#c5c7c9">Cm</div>
<div class="t" style="left:180.0px;top:205.2px;width:60px;text-align:center;font-size:11px;color:#c5c7c9">B<svg width="6" height="11" style="vertical-align:-1px;margin:0 0.3px 0 0.2px" viewBox="0 0 6 11"><path d="M1 0.3 V10 C2.6 9.2 5.2 7.6 5 6 C4.8 4.6 2.6 4.5 1 6.2" fill="none" stroke="currentColor" stroke-width="1.1"/></svg></div>
<div class="t" style="left:218.6px;top:227.5px;width:60px;text-align:center;font-size:11px;color:#c5c7c9">Gm</div>
<div class="t" style="left:225.2px;top:160.0px;width:60px;text-align:center;font-size:11px;color:#c5c7c9">F</div>
<div class="t" style="left:247.5px;top:198.6px;width:60px;text-align:center;font-size:11px;color:#c5c7c9">Dm</div>
<div class="t" style="left:287px;top:261px;width:60px;text-align:center;font-size:21px;color:#f4f4f4">B</div>
<div class="t" style="left:477.5px;top:143px;font-size:11px;color:#c6c8ca">Root</div>
<div class="ab" style="left:476px;top:159px;width:115px;height:25px;background:#2e3034"></div>
<div class="t" style="left:476px;top:167px;width:103px;text-align:center;font-size:11px;color:#d0d2d4">B</div>
<svg class="ab" style="left:576px;top:168px" width="12" height="8"><path d="M2.5 1.5 H10 L6.25 5.5 Z" fill="#b8babc"/></svg>
<div class="t" style="left:477.5px;top:201.5px;font-size:11px;color:#c6c8ca">Intervals</div>
<div class="ab" style="left:476px;top:217.0px;width:56.5px;height:25px;background:#2e3034"></div>
<div class="t" style="left:476px;top:224.0px;width:56.5px;text-align:center;font-size:11px;color:#c9cbcd">6</div>
<div class="ab" style="left:534.5px;top:217.0px;width:56.5px;height:25px;background:#2e3034"></div>
<div class="t" style="left:534.5px;top:224.0px;width:56.5px;text-align:center;font-size:11px;color:#c9cbcd">7</div>
<div class="ab" style="left:476px;top:243.5px;width:56.5px;height:25px;background:#2e3034"></div>
<div class="t" style="left:476px;top:250.5px;width:56.5px;text-align:center;font-size:11px;color:#c9cbcd">maj7</div>
<div class="ab" style="left:534.5px;top:243.5px;width:56.5px;height:25px;background:#2e3034"></div>
<div class="t" style="left:534.5px;top:250.5px;width:56.5px;text-align:center;font-size:11px;color:#c9cbcd">b9</div>
<div class="ab" style="left:476px;top:270.0px;width:56.5px;height:25px;background:#2e3034"></div>
<div class="t" style="left:476px;top:277.0px;width:56.5px;text-align:center;font-size:11px;color:#c9cbcd">9</div>
<div class="ab" style="left:534.5px;top:270.0px;width:56.5px;height:25px;background:#2e3034"></div>
<div class="t" style="left:534.5px;top:277.0px;width:56.5px;text-align:center;font-size:11px;color:#c9cbcd">#9</div>
<div class="ab" style="left:476px;top:296.5px;width:56.5px;height:25px;background:#2e3034"></div>
<div class="t" style="left:476px;top:303.5px;width:56.5px;text-align:center;font-size:11px;color:#c9cbcd">11</div>
<div class="ab" style="left:534.5px;top:296.5px;width:56.5px;height:25px;background:#2e3034"></div>
<div class="t" style="left:534.5px;top:303.5px;width:56.5px;text-align:center;font-size:11px;color:#c9cbcd">#11</div>
<div class="ab" style="left:476px;top:323.0px;width:56.5px;height:25px;background:#2e3034"></div>
<div class="t" style="left:476px;top:330.0px;width:56.5px;text-align:center;font-size:11px;color:#c9cbcd">b13</div>
<div class="ab" style="left:534.5px;top:323.0px;width:56.5px;height:25px;background:#2e3034"></div>
<div class="t" style="left:534.5px;top:330.0px;width:56.5px;text-align:center;font-size:11px;color:#c9cbcd">13</div>
<div class="t" style="left:477.5px;top:364px;font-size:11px;color:#c6c8ca">Bass</div>
<div class="ab" style="left:476px;top:380px;width:115px;height:25px;background:#2e3034"></div>
<div class="t" style="left:476px;top:388px;width:103px;text-align:center;font-size:11px;color:#d0d2d4">B</div>
<svg class="ab" style="left:576px;top:389px" width="12" height="8"><path d="M2.5 1.5 H10 L6.25 5.5 Z" fill="#b8babc"/></svg>
<div class="ab" style="left:34.5px;top:428.3px;width:565.5px;height:64.19999999999999px;background:#f2f2f2;overflow:hidden">
<div class="ab" style="left:-1.2999999999999972px;top:0;width:21.02px;height:64px;background:linear-gradient(#e4e4e4,#fafafa 40%,#f4f4f4);border-right:1px solid #a9a9a9"></div>
<div class="ab" style="left:19.720000000000002px;top:0;width:21.02px;height:64px;background:linear-gradient(#e4e4e4,#fafafa 40%,#f4f4f4);border-right:1px solid #a9a9a9"></div>
<div class="ab" style="left:40.74px;top:0;width:21.02px;height:64px;background:linear-gradient(#e4e4e4,#fafafa 40%,#f4f4f4);border-right:1px solid #a9a9a9"></div>
<div class="ab" style="left:61.760000000000005px;top:0;width:21.02px;height:64px;background:linear-gradient(#e4e4e4,#fafafa 40%,#f4f4f4);border-right:1px solid #a9a9a9"></div>
<div class="ab" style="left:82.78px;top:0;width:21.02px;height:64px;background:linear-gradient(#e4e4e4,#fafafa 40%,#f4f4f4);border-right:1px solid #a9a9a9"></div>
<div class="ab" style="left:103.8px;top:0;width:21.02px;height:64px;background:linear-gradient(#e4e4e4,#fafafa 40%,#f4f4f4);border-right:1px solid #a9a9a9"></div>
<div class="ab" style="left:124.82000000000001px;top:0;width:21.02px;height:64px;background:linear-gradient(#e4e4e4,#fafafa 40%,#f4f4f4);border-right:1px solid #a9a9a9"></div>
<div class="ab" style="left:145.83999999999997px;top:0;width:21.02px;height:64px;background:linear-gradient(#e4e4e4,#fafafa 40%,#f4f4f4);border-right:1px solid #a9a9a9"></div>
<div class="ab" style="left:166.86px;top:0;width:21.02px;height:64px;background:linear-gradient(#e4e4e4,#fafafa 40%,#f4f4f4);border-right:1px solid #a9a9a9"></div>
<div class="ab" style="left:187.88px;top:0;width:21.02px;height:64px;background:linear-gradient(#e4e4e4,#fafafa 40%,#f4f4f4);border-right:1px solid #a9a9a9"></div>
<div class="ab" style="left:208.89999999999998px;top:0;width:21.02px;height:64px;background:linear-gradient(#e4e4e4,#fafafa 40%,#f4f4f4);border-right:1px solid #a9a9a9"></div>
<div class="ab" style="left:229.92000000000002px;top:0;width:21.02px;height:64px;background:linear-gradient(#e4e4e4,#fafafa 40%,#f4f4f4);border-right:1px solid #a9a9a9"></div>
<div class="ab" style="left:250.94px;top:0;width:21.02px;height:64px;background:linear-gradient(#e4e4e4,#fafafa 40%,#f4f4f4);border-right:1px solid #a9a9a9"></div>
<div class="ab" style="left:271.96px;top:0;width:21.02px;height:64px;background:#2d86c9;border-right:1px solid #a9a9a9"></div>
<div class="ab" style="left:292.97999999999996px;top:0;width:21.02px;height:64px;background:linear-gradient(#e4e4e4,#fafafa 40%,#f4f4f4);border-right:1px solid #a9a9a9"></div>
<div class="ab" style="left:314.0px;top:0;width:21.02px;height:64px;background:linear-gradient(#e4e4e4,#fafafa 40%,#f4f4f4);border-right:1px solid #a9a9a9"></div>
<div class="ab" style="left:335.02px;top:0;width:21.02px;height:64px;background:linear-gradient(#e4e4e4,#fafafa 40%,#f4f4f4);border-right:1px solid #a9a9a9"></div>
<div class="ab" style="left:356.03999999999996px;top:0;width:21.02px;height:64px;background:linear-gradient(#e4e4e4,#fafafa 40%,#f4f4f4);border-right:1px solid #a9a9a9"></div>
<div class="ab" style="left:377.06px;top:0;width:21.02px;height:64px;background:linear-gradient(#e4e4e4,#fafafa 40%,#f4f4f4);border-right:1px solid #a9a9a9"></div>
<div class="ab" style="left:398.08px;top:0;width:21.02px;height:64px;background:linear-gradient(#e4e4e4,#fafafa 40%,#f4f4f4);border-right:1px solid #a9a9a9"></div>
<div class="ab" style="left:419.09999999999997px;top:0;width:21.02px;height:64px;background:linear-gradient(#e4e4e4,#fafafa 40%,#f4f4f4);border-right:1px solid #a9a9a9"></div>
<div class="ab" style="left:440.12px;top:0;width:21.02px;height:64px;background:linear-gradient(#e4e4e4,#fafafa 40%,#f4f4f4);border-right:1px solid #a9a9a9"></div>
<div class="ab" style="left:461.14px;top:0;width:21.02px;height:64px;background:linear-gradient(#e4e4e4,#fafafa 40%,#f4f4f4);border-right:1px solid #a9a9a9"></div>
<div class="ab" style="left:482.15999999999997px;top:0;width:21.02px;height:64px;background:linear-gradient(#e4e4e4,#fafafa 40%,#f4f4f4);border-right:1px solid #a9a9a9"></div>
<div class="ab" style="left:503.18px;top:0;width:21.02px;height:64px;background:linear-gradient(#e4e4e4,#fafafa 40%,#f4f4f4);border-right:1px solid #a9a9a9"></div>
<div class="ab" style="left:524.2px;top:0;width:21.02px;height:64px;background:linear-gradient(#e4e4e4,#fafafa 40%,#f4f4f4);border-right:1px solid #a9a9a9"></div>
<div class="ab" style="left:545.22px;top:0;width:21.02px;height:64px;background:linear-gradient(#e4e4e4,#fafafa 40%,#f4f4f4);border-right:1px solid #a9a9a9"></div>
<div class="ab" style="left:566.24px;top:0;width:21.02px;height:64px;background:linear-gradient(#e4e4e4,#fafafa 40%,#f4f4f4);border-right:1px solid #a9a9a9"></div>
<div class="ab" style="left:587.26px;top:0;width:21.02px;height:64px;background:linear-gradient(#e4e4e4,#fafafa 40%,#f4f4f4);border-right:1px solid #a9a9a9"></div>
<div class="ab" style="left:608.2800000000001px;top:0;width:21.02px;height:64px;background:linear-gradient(#e4e4e4,#fafafa 40%,#f4f4f4);border-right:1px solid #a9a9a9"></div>
<div class="ab" style="left:11.7px;top:-1px;width:12px;height:42.5px;background:linear-gradient(#222528 0%,#2c3034 45%,#383c40 78%,#2e3134 83%,#4c5054 86%,#3c3f43 91%,#151617 93%,#111 100%);border:1px solid #121314;border-top:0"></div>
<div class="ab" style="left:36.1px;top:-1px;width:12px;height:42.5px;background:linear-gradient(#222528 0%,#2c3034 45%,#383c40 78%,#2e3134 83%,#4c5054 86%,#3c3f43 91%,#151617 93%,#111 100%);border:1px solid #121314;border-top:0"></div>
<div class="ab" style="left:73.0px;top:-1px;width:12px;height:42.5px;background:linear-gradient(#222528 0%,#2c3034 45%,#383c40 78%,#2e3134 83%,#4c5054 86%,#3c3f43 91%,#151617 93%,#111 100%);border:1px solid #121314;border-top:0"></div>
<div class="ab" style="left:97.5px;top:-1px;width:12px;height:42.5px;background:linear-gradient(#222528 0%,#2c3034 45%,#383c40 78%,#2e3134 83%,#4c5054 86%,#3c3f43 91%,#151617 93%,#111 100%);border:1px solid #121314;border-top:0"></div>
<div class="ab" style="left:122.1px;top:-1px;width:12px;height:42.5px;background:linear-gradient(#222528 0%,#2c3034 45%,#383c40 78%,#2e3134 83%,#4c5054 86%,#3c3f43 91%,#151617 93%,#111 100%);border:1px solid #121314;border-top:0"></div>
<div class="ab" style="left:159.0px;top:-1px;width:12px;height:42.5px;background:linear-gradient(#222528 0%,#2c3034 45%,#383c40 78%,#2e3134 83%,#4c5054 86%,#3c3f43 91%,#151617 93%,#111 100%);border:1px solid #121314;border-top:0"></div>
<div class="ab" style="left:183.4px;top:-1px;width:12px;height:42.5px;background:linear-gradient(#222528 0%,#2c3034 45%,#383c40 78%,#2e3134 83%,#4c5054 86%,#3c3f43 91%,#151617 93%,#111 100%);border:1px solid #121314;border-top:0"></div>
<div class="ab" style="left:220.3px;top:-1px;width:12px;height:42.5px;background:linear-gradient(#222528 0%,#2c3034 45%,#383c40 78%,#2e3134 83%,#4c5054 86%,#3c3f43 91%,#151617 93%,#111 100%);border:1px solid #121314;border-top:0"></div>
<div class="ab" style="left:244.8px;top:-1px;width:12px;height:42.5px;background:linear-gradient(#222528 0%,#2c3034 45%,#383c40 78%,#2e3134 83%,#4c5054 86%,#3c3f43 91%,#151617 93%,#111 100%);border:1px solid #121314;border-top:0"></div>
<div class="ab" style="left:269.4px;top:-1px;width:12px;height:42.5px;background:linear-gradient(#222528 0%,#2c3034 45%,#383c40 78%,#2e3134 83%,#4c5054 86%,#3c3f43 91%,#151617 93%,#111 100%);border:1px solid #121314;border-top:0"></div>
<div class="ab" style="left:306.3px;top:-1px;width:12px;height:42.5px;background:linear-gradient(#222528 0%,#2c3034 45%,#383c40 78%,#2e3134 83%,#4c5054 86%,#3c3f43 91%,#151617 93%,#111 100%);border:1px solid #121314;border-top:0"></div>
<div class="ab" style="left:330.7px;top:-1px;width:12px;height:42.5px;background:linear-gradient(#2a8fd0,#2383c4);border:1px solid #121314;border-top:0"></div>
<div class="ab" style="left:367.6px;top:-1px;width:12px;height:42.5px;background:linear-gradient(#2a8fd0,#2383c4);border:1px solid #121314;border-top:0"></div>
<div class="ab" style="left:392.1px;top:-1px;width:12px;height:42.5px;background:linear-gradient(#222528 0%,#2c3034 45%,#383c40 78%,#2e3134 83%,#4c5054 86%,#3c3f43 91%,#151617 93%,#111 100%);border:1px solid #121314;border-top:0"></div>
<div class="ab" style="left:416.7px;top:-1px;width:12px;height:42.5px;background:linear-gradient(#222528 0%,#2c3034 45%,#383c40 78%,#2e3134 83%,#4c5054 86%,#3c3f43 91%,#151617 93%,#111 100%);border:1px solid #121314;border-top:0"></div>
<div class="ab" style="left:453.6px;top:-1px;width:12px;height:42.5px;background:linear-gradient(#222528 0%,#2c3034 45%,#383c40 78%,#2e3134 83%,#4c5054 86%,#3c3f43 91%,#151617 93%,#111 100%);border:1px solid #121314;border-top:0"></div>
<div class="ab" style="left:478.0px;top:-1px;width:12px;height:42.5px;background:linear-gradient(#222528 0%,#2c3034 45%,#383c40 78%,#2e3134 83%,#4c5054 86%,#3c3f43 91%,#151617 93%,#111 100%);border:1px solid #121314;border-top:0"></div>
<div class="ab" style="left:514.9px;top:-1px;width:12px;height:42.5px;background:linear-gradient(#222528 0%,#2c3034 45%,#383c40 78%,#2e3134 83%,#4c5054 86%,#3c3f43 91%,#151617 93%,#111 100%);border:1px solid #121314;border-top:0"></div>
<div class="ab" style="left:539.4px;top:-1px;width:12px;height:42.5px;background:linear-gradient(#222528 0%,#2c3034 45%,#383c40 78%,#2e3134 83%,#4c5054 86%,#3c3f43 91%,#151617 93%,#111 100%);border:1px solid #121314;border-top:0"></div>
<div class="ab" style="left:564.0px;top:-1px;width:12px;height:42.5px;background:linear-gradient(#222528 0%,#2c3034 45%,#383c40 78%,#2e3134 83%,#4c5054 86%,#3c3f43 91%,#151617 93%,#111 100%);border:1px solid #121314;border-top:0"></div>
<div class="ab" style="left:600.9px;top:-1px;width:12px;height:42.5px;background:linear-gradient(#222528 0%,#2c3034 45%,#383c40 78%,#2e3134 83%,#4c5054 86%,#3c3f43 91%,#151617 93%,#111 100%);border:1px solid #121314;border-top:0"></div>
<div class="ab" style="left:625.3px;top:-1px;width:12px;height:42.5px;background:linear-gradient(#222528 0%,#2c3034 45%,#383c40 78%,#2e3134 83%,#4c5054 86%,#3c3f43 91%,#151617 93%,#111 100%);border:1px solid #121314;border-top:0"></div>
<div class="ab" style="left:662.2px;top:-1px;width:12px;height:42.5px;background:linear-gradient(#222528 0%,#2c3034 45%,#383c40 78%,#2e3134 83%,#4c5054 86%,#3c3f43 91%,#151617 93%,#111 100%);border:1px solid #121314;border-top:0"></div>
<div class="ab" style="left:686.7px;top:-1px;width:12px;height:42.5px;background:linear-gradient(#222528 0%,#2c3034 45%,#383c40 78%,#2e3134 83%,#4c5054 86%,#3c3f43 91%,#151617 93%,#111 100%);border:1px solid #121314;border-top:0"></div>
<div class="ab" style="left:711.3px;top:-1px;width:12px;height:42.5px;background:linear-gradient(#222528 0%,#2c3034 45%,#383c40 78%,#2e3134 83%,#4c5054 86%,#3c3f43 91%,#151617 93%,#111 100%);border:1px solid #121314;border-top:0"></div>
</div>
<div class="ab" style="left:34px;top:492.5px;width:566px;height:2px;background:#2a2b2e"></div>
<div class="ab" style="left:447px;top:21px;width:1px;height:63px;background:rgba(215,235,255,0.55)"></div>
<div class="ab" style="left:329px;top:45.5px;width:75.5px;height:51px;border:4.5px solid #e01f27"></div>
</div></body></html>
